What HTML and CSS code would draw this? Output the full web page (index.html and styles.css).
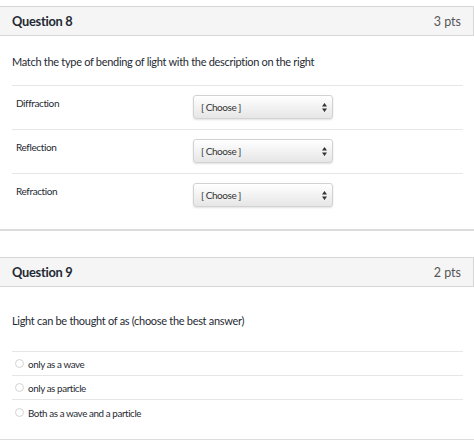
FILE: index.html
```html
<!DOCTYPE html>
<html>
<head>
<meta charset="utf-8">
<link rel="stylesheet" href="styles.css">
</head>
<body>
<div class="page">
  <section class="question q8">
    <div class="q-header">
      <span class="q-title">Question 8</span>
      <span class="q-pts">3 pts</span>
    </div>
    <div class="q-body">
      <p class="q-text">Match the type of bending of light with the description on the right</p>
      <div class="match-list">
        <div class="match-row">
          <div class="match-label">Diffraction</div>
          <div class="select"><span>[ Choose ]</span><span class="arrows"><svg width="5" height="9" viewBox="0 0 5 9"><path d="M2.5 0 L5 3.5 L0 3.5 Z M2.5 9 L5 5.5 L0 5.5 Z" fill="#333"/></svg></span></div>
        </div>
        <div class="match-row">
          <div class="match-label">Reflection</div>
          <div class="select"><span>[ Choose ]</span><span class="arrows"><svg width="5" height="9" viewBox="0 0 5 9"><path d="M2.5 0 L5 3.5 L0 3.5 Z M2.5 9 L5 5.5 L0 5.5 Z" fill="#333"/></svg></span></div>
        </div>
        <div class="match-row last">
          <div class="match-label">Refraction</div>
          <div class="select"><span>[ Choose ]</span><span class="arrows"><svg width="5" height="9" viewBox="0 0 5 9"><path d="M2.5 0 L5 3.5 L0 3.5 Z M2.5 9 L5 5.5 L0 5.5 Z" fill="#333"/></svg></span></div>
        </div>
      </div>
    </div>
  </section>

  <section class="question q9">
    <div class="q-header">
      <span class="q-title">Question 9</span>
      <span class="q-pts">2 pts</span>
    </div>
    <div class="q-body">
      <p class="q-text">Light can be thought of as (choose the best answer)</p>
      <div class="options">
        <div class="option"><span class="radio"></span><span>only as a wave</span></div>
        <div class="option"><span class="radio"></span><span>only as particle</span></div>
        <div class="option last"><span class="radio"></span><span>Both as a wave and a particle</span></div>
      </div>
    </div>
  </section>
</div>
</body>
</html>
```

FILE: styles.css
```css
html, body {
  margin: 0;
  padding: 0;
  background: #fff;
}
body {
  font-family: Lato, "Open Sans", sans-serif;
  color: #2d3b45;
}
.page {
  padding-top: 6px;
}
.question {
  border-bottom: 2px solid #dcdcdc;
}
.q9 {
  margin-top: 26px;
}
.q-header {
  display: flex;
  justify-content: space-between;
  align-items: center;
  height: 28px;
  padding: 0 12px;
  background: #f5f5f5;
  border-top: 1px solid #d6d6d6;
  border-bottom: 1px solid #d6d6d6;
  border-right: 1px solid #d6d6d6;
}
.q-title {
  font-weight: bold;
  font-size: 12.8px;
  letter-spacing: -0.25px;
  color: #1f2a33;
}
.q-pts {
  font-size: 12.5px;
  color: #555;
}
.q-body {
  padding: 0 11px 0 12px;
}
.q-text {
  margin: 0;
  font-size: 11px;
  letter-spacing: -0.3px;
  line-height: 14px;
  padding: 19px 0 16px;
  color: #1f2a33;
}
.q9 .q-text {
  padding: 27px 0 23px;
}
.match-list {
  border-top: 1px solid #e6e6e6;
}
.match-row {
  display: flex;
  height: 43px;
  border-bottom: 1px solid #e6e6e6;
}
.match-row.last {
  border-bottom: none;
  height: 55px;
}
.match-label {
  width: 181px;
  box-sizing: border-box;
  padding: 10px 0 0 4px;
  font-size: 10px;
  letter-spacing: -0.4px;
  line-height: 14px;
  color: #1f2a33;
}
.select {
  margin-top: 9px;
  height: 22px;
  box-sizing: content-box;
  border: 1px solid #d2d2d2;
  border-radius: 3px;
  background: linear-gradient(#ffffff, #e6e6e6);
  box-shadow: 0 1px 2px rgba(0,0,0,0.12);
  display: flex;
  align-items: center;
  justify-content: space-between;
  padding: 0 5px 0 7px;
  width: 126px;
  font-size: 10px;
  letter-spacing: -0.45px;
  color: #333;
}
.arrows {
  display: flex;
  align-items: center;
}
.options {
  border-top: 1px solid #e6e6e6;
}
.option {
  display: flex;
  align-items: center;
  height: 23px;
  border-bottom: 1px solid #e6e6e6;
  font-size: 9.8px;
  letter-spacing: -0.4px;
  padding-left: 3px;
  color: #1f2a33;
}
.option.last {
  border-bottom: none;
  height: 25px;
  padding-bottom: 14px;
}
.radio {
  width: 7px;
  height: 7px;
  border: 1px solid #d4d4d4;
  border-radius: 50%;
  margin-right: 4px;
  background: #fff;
}
```
